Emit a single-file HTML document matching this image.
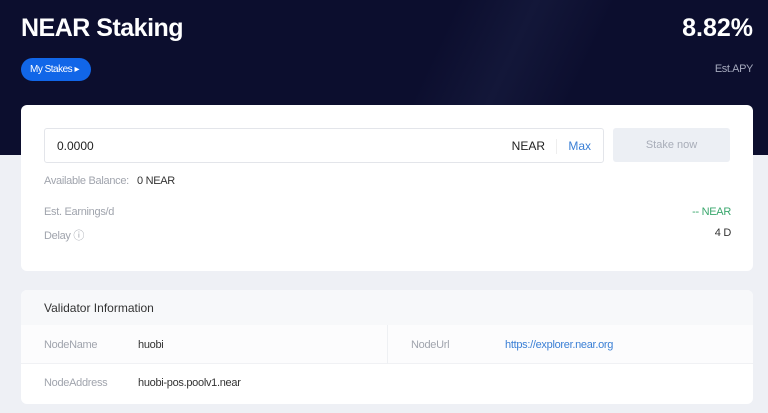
<!DOCTYPE html>
<html><head><meta charset="utf-8"><style>
*{margin:0;padding:0;box-sizing:border-box}
body{width:768px;height:413px;background:#eef0f5;font-family:"Liberation Sans",sans-serif;position:relative;overflow:hidden}
.hdr{position:absolute;left:0;top:0;width:768px;height:155px;background:#0c0e2e;overflow:hidden}
.hdr .g{position:absolute;top:-20px;left:420px;width:160px;height:200px;background:linear-gradient(90deg,rgba(40,50,90,0),rgba(40,50,90,.25),rgba(40,50,90,0));transform:skewX(-25deg)}
.t{position:absolute;left:21px;top:14px;color:#fff;font-size:25px;font-weight:bold;letter-spacing:-0.5px}
.apy{position:absolute;right:15px;top:14px;color:#fff;font-size:25px;font-weight:bold}
.est{position:absolute;right:15px;top:63px;color:#a5a9bd;font-size:11px;letter-spacing:-0.4px}
.btn{position:absolute;left:21px;top:58px;width:70px;height:23px;border-radius:12px;background:#1166e8;color:#fff;font-size:10px;line-height:23px;padding-left:9px;letter-spacing:-0.5px}
.card{position:absolute;left:21px;width:732px;background:#fff;border-radius:6px}
.c1{top:105px;height:166px}
.inp{position:absolute;left:23px;top:23px;width:560px;height:35px;border:1px solid #e3e5ea;border-radius:3px;font-size:12px;color:#222}
.inp .v{position:absolute;left:12px;top:10px}
.inp .n{position:absolute;right:58px;top:10px}
.inp .sep{position:absolute;right:46px;top:10px;width:1px;height:15px;background:#eee}
.inp .m{position:absolute;right:12px;top:10px;color:#3a7fd5}
.sk{position:absolute;left:592px;top:23px;width:117px;height:34px;background:#eceff4;border-radius:3px;color:#a8adb8;font-size:11px;text-align:center;line-height:34px}
.s{position:absolute;font-size:11px;letter-spacing:-0.3px}
.gr{color:#a0a4ad}.dk{color:#333}
.c2{top:290px;height:114px;overflow:hidden}
.h2{position:absolute;left:0;top:0;width:100%;height:35px;background:#f7f8fa;font-size:12px;color:#333;padding:11px 0 0 23px}
.r1{position:absolute;left:0;top:35px;width:100%;height:39px;background:#fcfcfd;border-bottom:1px solid #f0f1f4}
.vd{position:absolute;left:366px;top:35px;width:1px;height:39px;background:#eef0f3}
</style></head><body>
<div class="hdr"><div class="g"></div>
<div class="t">NEAR Staking</div>
<div class="apy">8.82%</div>
<div class="est">Est.APY</div>
<div class="btn">My Stakes ▸</div>
</div>
<div class="card c1">
<div class="inp"><span class="v">0.0000</span><span class="n">NEAR</span><span class="sep"></span><span class="m">Max</span></div>
<div class="sk">Stake now</div>
<div class="s gr" style="left:23px;top:70px">Available Balance:</div>
<div class="s dk" style="left:116px;top:70px">0 NEAR</div>
<div class="s gr" style="left:23px;top:101px">Est. Earnings/d</div>
<div class="s" style="right:22px;top:101px;color:#3aa76d">-- NEAR</div>
<div class="s gr" style="left:23px;top:122px">Delay ⓘ</div>
<div class="s dk" style="right:22px;top:122px">4 D</div>
</div>
<div class="card c2">
<div class="h2">Validator Information</div>
<div class="r1"></div><div class="vd"></div>
<div class="s gr" style="left:23px;top:49px">NodeName</div>
<div class="s dk" style="left:117px;top:49px">huobi</div>
<div class="s gr" style="left:390px;top:49px">NodeUrl</div>
<div class="s" style="left:484px;top:49px;color:#3a7fd5">https://explorer.near.org</div>
<div class="s gr" style="left:23px;top:87px">NodeAddress</div>
<div class="s dk" style="left:117px;top:87px">huobi-pos.poolv1.near</div>
</div>
</body></html>
